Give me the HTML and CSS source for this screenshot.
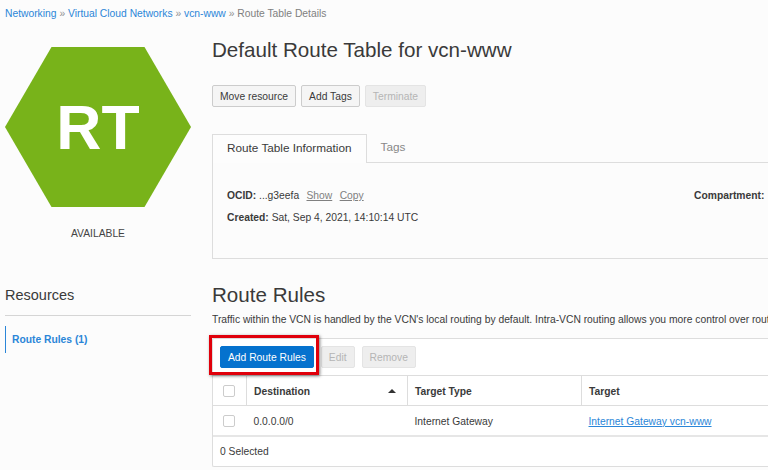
FILE: index.html
```html
<!DOCTYPE html>
<html lang="en">
<head>
  <meta charset="UTF-8">
  <title>Route Table Details</title>
  <link rel="stylesheet" href="styles.css">
</head>
<body>
  <nav class="breadcrumb">
    <a href="#">Networking</a> <span class="sep">»</span>
    <a href="#">Virtual Cloud Networks</a> <span class="sep">»</span>
    <a href="#">vcn-www</a> <span class="sep">»</span>
    <span>Route Table Details</span>
  </nav>

  <div class="page">
    <aside class="sidebar">
      <div class="hexagon">RT</div>
      <div class="status">AVAILABLE</div>
      <h3 class="resources-title">Resources</h3>
      <a href="#" class="resource-link">Route Rules (1)</a>
    </aside>

    <main class="content">
      <h1>Default Route Table for vcn-www</h1>
      <div class="actions">
        <button class="btn">Move resource</button>
        <button class="btn">Add Tags</button>
        <button class="btn btn-disabled">Terminate</button>
      </div>

      <div class="tabs">
        <div class="tab tab-active">Route Table Information</div>
        <div class="tab">Tags</div>
      </div>
      <div class="info-panel">
        <div class="info-col">
          <div class="info-row"><b>OCID:</b> ...g3eefa <a href="#" class="muted-link">Show</a> <a href="#" class="muted-link">Copy</a></div>
          <div class="info-row"><b>Created:</b> Sat, Sep 4, 2021, 14:10:14 UTC</div>
        </div>
        <div class="info-col">
          <div class="info-row"><b>Compartment:</b></div>
        </div>
      </div>

      <h2>Route Rules</h2>
      <p class="description">Traffic within the VCN is handled by the VCN's local routing by default. Intra-VCN routing allows you more control over routing between subnets in the VCN.</p>

      <div class="table-box">
        <div class="toolbar">
          <div class="highlight"></div>
          <button class="btn btn-primary">Add Route Rules</button>
          <button class="btn btn-disabled btn-edit">Edit</button>
          <button class="btn btn-disabled">Remove</button>
        </div>
        <table class="rules">
          <thead>
            <tr>
              <th class="col-check"><span class="checkbox"></span></th>
              <th class="col-dest"><div class="th-sort">Destination <span class="sort-up"></span></div></th>
              <th class="col-type">Target Type</th>
              <th>Target</th>
            </tr>
          </thead>
          <tbody>
            <tr>
              <td class="col-check"><span class="checkbox"></span></td>
              <td>0.0.0.0/0</td>
              <td>Internet Gateway</td>
              <td><a href="#" class="target-link">Internet Gateway vcn-www</a></td>
            </tr>
          </tbody>
        </table>
        <div class="table-footer">0 Selected</div>
      </div>
    </main>
  </div>
</body>
</html>
```

FILE: styles.css
```css
html {
  font-family: "Liberation Sans", Arial, sans-serif;
}

body {
  margin: 0;
  height: 470px;
  overflow: hidden;
  background-color: #fcfcfc;
  color: #3a3a3a;
  font-size: 10.3px;
}

a {
  color: #2b86d8;
  text-decoration: none;
}

.breadcrumb {
  padding: 7px 5px 0;
  height: 13px;
  line-height: 13px;
  color: #808080;
}
.sep {
  color: #909090;
}

.page {
  display: flex;
  margin-top: 7px;
  padding-left: 5px;
}

/* left column */
.sidebar {
  width: 186px;
  flex-shrink: 0;
  padding-top: 20px;
}
.hexagon {
  display: flex;
  justify-content: center;
  align-items: center;
  width: 186px;
  height: 160px;
  background-color: #78b31a;
  clip-path: polygon(25% 0, 75% 0, 100% 50%, 75% 100%, 25% 100%, 0 50%);
  color: #fff;
  font-size: 62.5px;
  font-weight: bold;
}
.status {
  margin-top: 20px;
  text-align: center;
  line-height: 13px;
  color: #444;
}
.resources-title {
  margin: 47px 0 0;
  padding-bottom: 11px;
  border-bottom: 1px solid #d5d5d5;
  font-size: 14.5px;
  line-height: 17px;
  font-weight: normal;
}
.resource-link {
  display: block;
  margin-top: 10px;
  height: 27px;
  padding-left: 6px;
  border-left: 1px solid #2b86d8;
  line-height: 27px;
  font-weight: bold;
}

/* right column */
.content {
  flex: 1;
  min-width: 0;
  margin-left: 21px;
}
h1 {
  margin: 9px 0 0;
  font-size: 20.6px;
  line-height: 27px;
  font-weight: normal;
}
.actions {
  display: flex;
  gap: 5px;
  margin-top: 22px;
}
.btn {
  height: 22px;
  padding: 0 7px;
  border: 1px solid #ccc;
  border-radius: 2px;
  background-color: #f5f5f5;
  color: #3a3a3a;
  font-family: inherit;
  font-size: 10.3px;
}
.btn-disabled {
  border-color: #e4e4e4;
  background-color: #eee;
  color: #b5b5b5;
}
.btn-primary {
  margin-right: 2px;
  border-color: #0572ce;
  background-color: #0572ce;
  color: #fff;
}
.btn-edit {
  margin-right: 2px;
}

.tabs {
  display: flex;
  margin-top: 27px;
  height: 28px;
  border-bottom: 1px solid #ddd;
}
.tab {
  padding: 0 14px;
  line-height: 26px;
  font-size: 11.75px;
  color: #888;
}
.tab-active {
  height: 28px;
  border: 1px solid #ddd;
  border-bottom: none;
  background-color: #fdfdfd;
  color: #3a3a3a;
}
.info-panel {
  display: grid;
  grid-template-columns: 467px 1fr;
  height: 96px;
  padding: 26px 0 0 14px;
  box-sizing: border-box;
  border-left: 1px solid #ddd;
  border-bottom: 1px solid #ddd;
}
.info-row {
  margin-bottom: 9px;
  line-height: 13px;
}
.muted-link {
  margin-left: 4.5px;
  color: #808080;
  text-decoration: underline;
}

h2 {
  margin: 23px 0 0;
  font-size: 20.6px;
  line-height: 26px;
  font-weight: normal;
}
.description {
  margin: 5px 0 0;
  line-height: 13px;
  white-space: nowrap;
  overflow: hidden;
}

.table-box {
  margin-top: 12px;
  border: 1px solid #ddd;
  border-right: none;
  border-radius: 2px 0 0 2px;
  background-color: #fff;
}
.toolbar {
  position: relative;
  display: flex;
  gap: 5px;
  padding: 7px;
  height: 22px;
}
.highlight {
  position: absolute;
  left: -4px;
  top: -4px;
  width: 104px;
  height: 34px;
  border: 3px solid #e0000b;
  box-shadow: 1px 1px 3px rgba(0, 0, 0, 0.5);
}

.rules {
  width: 100%;
  table-layout: fixed;
  border-collapse: collapse;
}
.rules th, .rules td {
  height: 28px;
  padding: 1px 7px 0;
  text-align: left;
}
.rules th {
  border-top: 1px solid #ddd;
  border-bottom: 1px solid #ddd;
  border-left: 1px solid #ddd;
}
.rules th:first-child {
  border-left: none;
}
.rules td {
  border-bottom: 2px solid #e6e6e6;
}
.rules .col-check {
  width: 23px;
  padding: 0 0 0 10px;
}
.col-dest {
  width: 146px;
}
.col-type {
  width: 159px;
}
.th-sort {
  display: flex;
  justify-content: space-between;
  align-items: center;
  padding-right: 4px;
}
.sort-up {
  width: 0;
  height: 0;
  border-left: 4px solid transparent;
  border-right: 4px solid transparent;
  border-bottom: 4px solid #333;
}
.checkbox {
  display: block;
  width: 10px;
  height: 10px;
  border: 1px solid #ccc;
  border-radius: 2px;
  background-color: #fff;
}
.target-link {
  text-decoration: underline;
}
.table-footer {
  height: 29px;
  padding-left: 7px;
  line-height: 29px;
}
```
